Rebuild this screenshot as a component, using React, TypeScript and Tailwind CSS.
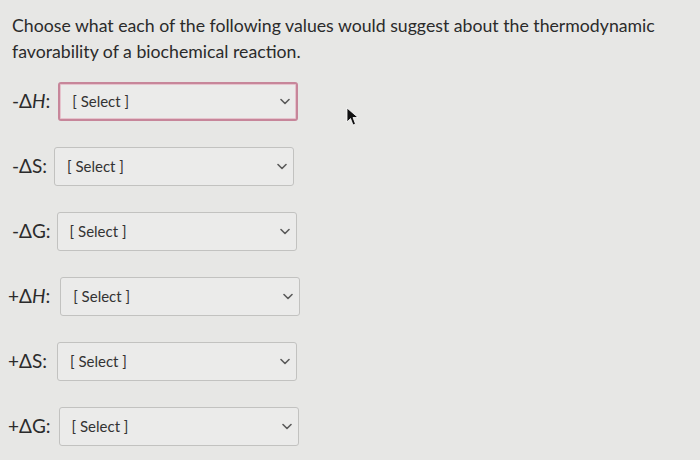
import React from "react";

type Row = { sign: string; letter: string; italic: boolean; pl: number; ml: number; focused?: boolean };

const rows: Row[] = [
  { sign: "-", letter: "H", italic: true, pl: 12, ml: 8, focused: true },
  { sign: "-", letter: "S", italic: false, pl: 12, ml: 7 },
  { sign: "-", letter: "G", italic: false, pl: 12, ml: 6 },
  { sign: "+", letter: "H", italic: true, pl: 8, ml: 10 },
  { sign: "+", letter: "S", italic: false, pl: 8, ml: 10 },
  { sign: "+", letter: "G", italic: false, pl: 8, ml: 8 },
];

function Chevron() {
  return (
    <svg width="10" height="7" viewBox="0 0 10 7" className="shrink-0">
      <path d="M1 1.5 L5 5.5 L9 1.5" fill="none" stroke="#5a5a5a" strokeWidth="1.6" strokeLinecap="round" strokeLinejoin="round" />
    </svg>
  );
}

export default function App() {
  return (
    <div
      className="relative w-[700px] h-[460px] overflow-hidden bg-[#e7e7e5] text-[#2f2f2f]"
      style={{ fontFamily: "Lato, 'Open Sans', sans-serif" }}
    >
      <p className="pl-[12px] pt-[13px] pr-[20px] text-[17.7px] leading-[26px] text-[#2b2b2b]">
        Choose what each of the following values would suggest about the thermodynamic favorability of a biochemical reaction.
      </p>
      <div className="mt-[17px] flex flex-col gap-[26px]">
        {rows.map((r, i) => (
          <div key={i} className="flex items-center" style={{ paddingLeft: r.pl }}>
            <span className="text-[19px] text-[#2b2b2b] whitespace-nowrap">
              {r.sign}Δ<span className={r.italic ? "italic" : ""}>{r.letter}</span>:
            </span>
            <div
              style={{ marginLeft: r.ml }}
              className={
                "w-[240px] h-[39px] flex items-center justify-between pl-[12px] pr-[6px] rounded-[3px] bg-[#ebebea] " +
                (r.focused
                  ? "border-2 border-[#c7869a] shadow-[inset_0_0_0_1px_#e6c3cd]"
                  : "border border-[#c2c2c0]")
              }
            >
              <span className="text-[15px] text-[#333]">[ Select ]</span>
              <Chevron />
            </div>
          </div>
        ))}
      </div>
      <svg className="absolute left-[346px] top-[107px]" width="14" height="20" viewBox="0 0 14 20">
        <path d="M1 1 L1 15 L4.5 11.5 L7 18 L9.5 17 L7 10.5 L12 10.5 Z" fill="#111" stroke="#fff" strokeWidth="0.8" />
      </svg>
    </div>
  );
}
